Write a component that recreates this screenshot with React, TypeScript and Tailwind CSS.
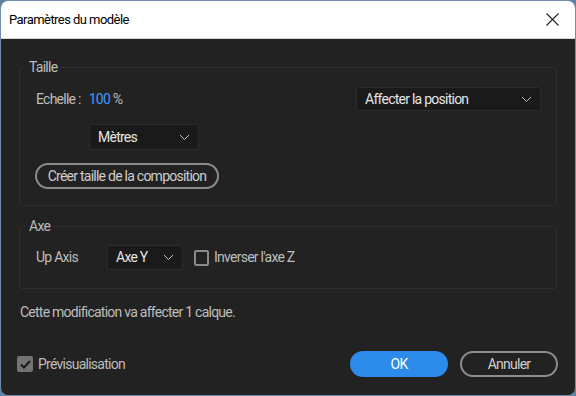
import React from "react";

const ui = "font-['Roboto',sans-serif] tracking-[-0.75px]";

const Chevron: React.FC = () => (
  <svg width="11" height="7" viewBox="0 0 11 7" fill="none" className="shrink-0">
    <path d="M1 1l4.5 4.5L10 1" stroke="#bdbdbd" strokeWidth="1" />
  </svg>
);

type DropdownProps = {
  label: string;
  className: string;
};

const Dropdown: React.FC<DropdownProps> = ({ label, className }) => (
  <div
    className={`flex items-center justify-between rounded-[3px] border border-[#2c2c2c] bg-[#1a1a1a] pl-2 pr-2 text-[14px] text-[#e4e4e4] ${className}`}
  >
    <span className="whitespace-nowrap">{label}</span>
    <Chevron />
  </div>
);

const Group: React.FC<{ title: string; className: string; children: React.ReactNode }> = ({
  title,
  className,
  children,
}) => (
  <div className={`relative mx-[18px] rounded-[3px] border border-[#2e2e2e] ${className}`}>
    <span className="absolute -top-[10px] left-[6px] bg-[#222222] px-[3px] text-[14px] leading-[18px] text-[#bdbdbd]">
      {title}
    </span>
    {children}
  </div>
);

export default function App() {
  return (
    <div className="h-[396px] w-[576px] bg-[#5b7ea3]">
      <div className="flex h-[396px] w-[576px] flex-col overflow-hidden rounded-[8px] border border-[#6d8cae]">
        <div className="flex h-[38px] items-center justify-between border-b border-[#d8d8d8] bg-white pl-2 pr-4 font-['Roboto',sans-serif] text-[13px] text-black">
          <span className="tracking-[-0.55px]">Paramètres du modèle</span>
          <svg width="13" height="13" viewBox="0 0 13 13">
            <path d="M0.5 0.5l12 12M12.5 0.5l-12 12" stroke="#222" strokeWidth="1.1" />
          </svg>
        </div>
        <div className={`flex flex-1 flex-col bg-[#222222] pt-[28px] text-[#bdbdbd] ${ui}`}>
          <Group title="Taille" className="h-[139px]">
            <div className="flex items-center justify-between pl-4 pr-[15px] pt-[19px]">
              <div className="flex items-center gap-[8px] text-[14px]">
                <span>Echelle :</span>
                <span>
                  <span className="text-[#3b9bff]">100</span> %
                </span>
              </div>
              <Dropdown label="Affecter la position" className="h-[24px] w-[185px]" />
            </div>
            <div className="pl-[69px] pt-[13px]">
              <Dropdown label="Mètres" className="h-[26px] w-[110px]" />
            </div>
            <div className="pl-[15px] pt-[13px]">
              <div className="flex h-[26px] w-[184px] items-center justify-center whitespace-nowrap rounded-full border-2 border-[#8c8c8c] text-[14px] text-[#cfcfcf]">
                Créer taille de la composition
              </div>
            </div>
          </Group>
          <Group title="Axe" className="mt-[20px] h-[63px]">
            <div className="flex items-center pl-4 pt-[18px] text-[14px]">
              <span className="w-[71px]">Up Axis</span>
              <Dropdown label="Axe Y" className="h-[25px] w-[76px]" />
              <div className="ml-[11px] h-[16px] w-[15px] rounded-[2px] border-2 border-[#8a8a8a]" />
              <span className="ml-[5px]">Inverser l'axe Z</span>
            </div>
          </Group>
          <div className="pl-[19px] pt-[13px] text-[14px]">Cette modification va affecter 1 calque.</div>
          <div className="mt-auto flex items-center justify-between pb-[18px] pl-[16px] pr-[17px]">
            <div className="flex items-center gap-[5px] text-[14px]">
              <div className="flex h-[16px] w-[16px] items-center justify-center rounded-[2px] bg-[#737373]">
                <svg width="11" height="9" viewBox="0 0 11 9" fill="none">
                  <path d="M1 4.5l3 3L10 1" stroke="#1a1a1a" strokeWidth="2" />
                </svg>
              </div>
              <span>Prévisualisation</span>
            </div>
            <div className="flex gap-[12px]">
              <div className="flex h-[26px] w-[98px] items-center justify-center rounded-full bg-[#2d8ceb] text-[14px] text-white">
                OK
              </div>
              <div className="flex h-[26px] w-[98px] items-center justify-center rounded-full border-2 border-[#8c8c8c] text-[14px] text-[#cfcfcf]">
                Annuler
              </div>
            </div>
          </div>
        </div>
      </div>
    </div>
  );
}
